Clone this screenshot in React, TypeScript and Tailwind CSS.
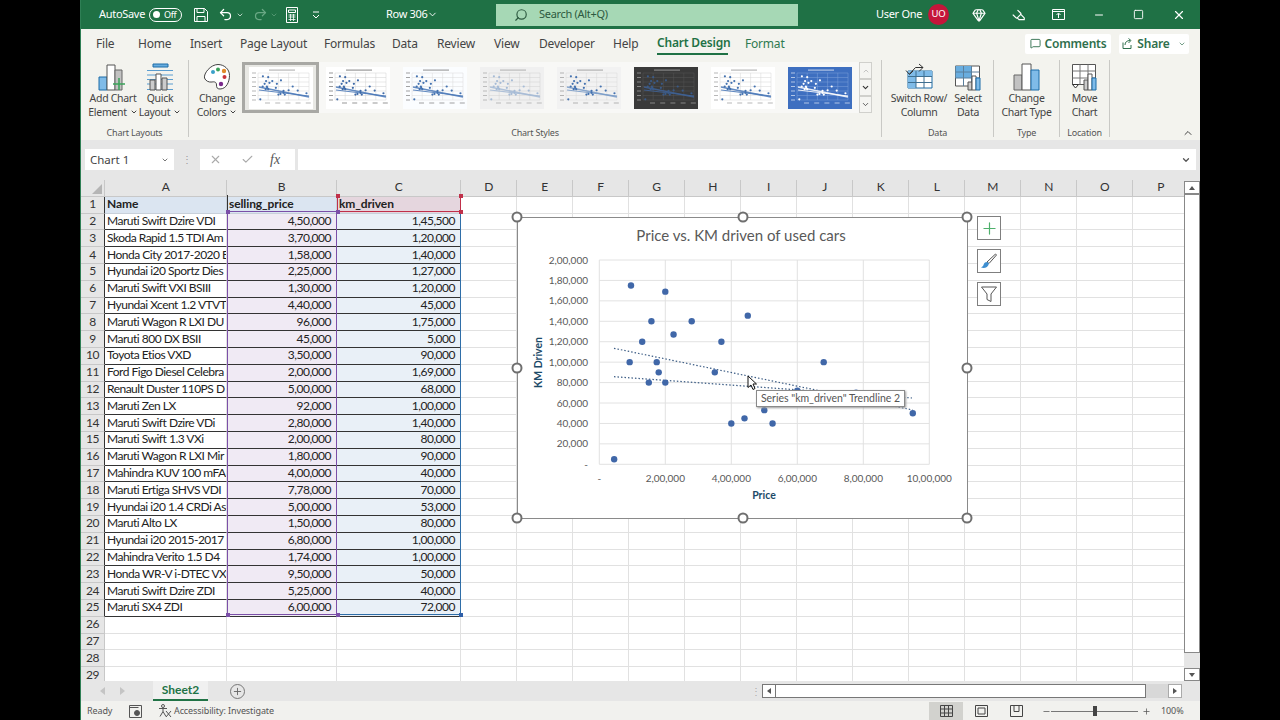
import { FC, ReactNode } from "react";
import { Check, ChevronDown, ChevronUp, Gem, Highlighter, MessageSquare, Minus, Plus, Redo2, Search, Square, Undo2, X } from "lucide-react";

const rows: [string, number, number][] = [
    ["Maruti Swift Dzire VDI", 450000, 145500],
    ["Skoda Rapid 1.5 TDI Am", 370000, 120000],
    ["Honda City 2017-2020 E", 158000, 140000],
    ["Hyundai i20 Sportz Dies", 225000, 127000],
    ["Maruti Swift VXI BSIII", 130000, 120000],
    ["Hyundai Xcent 1.2 VTVT", 440000, 45000],
    ["Maruti Wagon R LXI DU", 96000, 175000],
    ["Maruti 800 DX BSII", 45000, 5000],
    ["Toyota Etios VXD", 350000, 90000],
    ["Ford Figo Diesel Celebra", 200000, 169000],
    ["Renault Duster 110PS D", 500000, 68000],
    ["Maruti Zen LX", 92000, 100000],
    ["Maruti Swift Dzire VDi", 280000, 140000],
    ["Maruti Swift 1.3 VXi", 200000, 80000],
    ["Maruti Wagon R LXI Mir", 180000, 90000],
    ["Mahindra KUV 100 mFA", 400000, 40000],
    ["Maruti Ertiga SHVS VDI", 778000, 70000],
    ["Hyundai i20 1.4 CRDi As", 500000, 53000],
    ["Maruti Alto LX", 150000, 80000],
    ["Hyundai i20 2015-2017", 680000, 100000],
    ["Mahindra Verito 1.5 D4", 174000, 100000],
    ["Honda WR-V i-DTEC VX", 950000, 50000],
    ["Maruti Swift Dzire ZDI", 525000, 40000],
    ["Maruti SX4 ZDI", 600000, 72000],
];

const fmt = (n: number) => n.toLocaleString("en-IN");
const emptyCols = ["D", "E", "F", "G", "H", "I", "J", "K", "L", "M", "N", "O", "P"];

const Toggle = () => (
    <div className="w-[33px] h-[14px] rounded-full border border-white flex items-center gap-[4px] px-[3px]">
        <div className="w-[7px] h-[7px] rounded-full bg-white" />
        <span className="text-[9px] leading-none text-white">Off</span>
    </div>
);

const TitleBar = () => (
    <div className="h-[29px] bg-[#1f7145] flex items-center text-white text-[11px] tracking-[-0.3px] pl-[18px] whitespace-nowrap">
        <span className="w-[50px]">AutoSave</span>
        <Toggle />
        <svg width="16" height="16" viewBox="0 0 16 16" fill="none" stroke="white" className="ml-[11px]">
            <path d="M1.5 1.5h10l3 3v10h-13z M4 1.5v4h7v-4 M4 14.5v-5h8v5" />
        </svg>
        <Undo2 size={15} className="ml-[9px]" />
        <ChevronDown size={8} className="ml-[3px]" />
        <Redo2 size={15} className="ml-[9px] text-[#6aa885]" />
        <ChevronDown size={8} className="ml-[2px] text-[#6aa885]" />
        <svg width="12" height="16" viewBox="0 0 12 16" fill="none" stroke="white" className="ml-[8px]">
            <path d="M.5.5h11v15H.5z M2.5 3h7v2.5h-7z" />
            <path d="M2.5 8h7M2.5 10h7M2.5 12.5h7M4.5 7v7M7.5 7v7" strokeWidth=".8" />
        </svg>
        <svg width="8" height="8" viewBox="0 0 8 8" fill="none" stroke="white" className="ml-[14px]">
            <path d="M1 1h6M1 4l3 3 3-3" />
        </svg>
        <span className="ml-[66px] w-[41px]">Row 306</span>
        <ChevronDown size={11} />
        <div className="ml-[58px] w-[302px] h-[22px] bg-[#a6d8b5] flex items-center pl-[18px] text-[#2d5a40]">
            <Search size={14} className="-scale-x-100" />
            <span className="ml-[11px]">Search (Alt+Q)</span>
        </div>
        <span className="ml-[78px] w-[42px]">User One</span>
        <div className="ml-[10px] w-[21px] h-[21px] rounded-full bg-[#c4163a] flex items-center justify-center text-[9.5px]">UO</div>
        <Gem size={14} className="ml-[23px]" />
        <Highlighter size={14} className="ml-[26px] -scale-x-100" />
        <svg width="13" height="11" viewBox="0 0 13 11" fill="none" stroke="white" className="ml-[26px]">
            <path d="M.5.5h12v10H.5z M.5 2.5h12 M6.5 9V4.5 M4.5 6l2-2 2 2" />
        </svg>
        <Minus size={12} className="ml-[28px]" />
        <Square size={11} className="ml-[28px]" />
        <X size={14} className="ml-[28px]" />
    </div>
);

const tabs: [string, string][] = [
    ["File", "w-[42px]"],
    ["Home", "w-[52px]"],
    ["Insert", "w-[50px]"],
    ["Page Layout", "w-[84px]"],
    ["Formulas", "w-[68px]"],
    ["Data", "w-[45px]"],
    ["Review", "w-[57px]"],
    ["View", "w-[45px]"],
    ["Developer", "w-[74px]"],
    ["Help", "w-[44px]"],
];

const TabRow = () => (
    <div className="h-[28px] bg-[#f3f3ee] flex items-center text-[12px] tracking-[-0.2px] text-[#444] pl-[15px] pt-[1px]">
        {tabs.map(([t, w]) => <span key={t} className={w}>{t}</span>)}
        <span className="w-[88px] h-[27px] flex items-start font-semibold text-[#1f7145]">
            <span className="w-[71px] h-[25px] pt-[2px] flex items-center whitespace-nowrap border-b-[2px] border-[#1f7145]">Chart Design</span>
        </span>
        <span className="text-[#2f7a50]">Format</span>
        <div className="ml-auto flex items-center mr-[11px] gap-[8px] font-semibold text-[#2f6f4d]">
            <div className="w-[86px] h-[20px] bg-white rounded-[2px] flex items-center justify-center gap-[4px]">
                <MessageSquare size={11} />Comments
            </div>
            <div className="w-[70px] h-[20px] bg-white rounded-[2px] flex items-center justify-center gap-[4px]">
                <svg width="11" height="11" viewBox="0 0 11 11" fill="none" stroke="currentColor"><path d="M1 4.5v6h8V7 M3 7c0-3 2-4.500 5-4.500 M6.500.5l2.500 2-2.500 2.500" /></svg>
                Share<ChevronDown size={8} className="ml-[4px]" />
            </div>
        </div>
    </div>
);

const AddChartIcon = () => (
    <svg width="30" height="28" viewBox="0 0 30 28">
        <path d="M1 14h8v13H1z" fill="#7fbbe8" stroke="#1d6ca8" />
        <path d="M9 2h8v25H9z" fill="#fff" stroke="#555" />
        <path d="M17 7h7v20h-7z" fill="#c2c2c2" stroke="#666" />
        <path d="M21 15v12M15 21h12" stroke="#3aa25a" strokeWidth="1.500" fill="none" />
    </svg>
);

const QuickIcon = () => (
    <svg width="28" height="28" viewBox="0 0 28 28" fill="none">
        <path d="M7 1h15v3H7z" fill="#69addf" stroke="#1d6ca8" />
        <path d="M1 7.500h26M1 12h26M1 16.500h26M1 21h26M1 26.500h26" stroke="#5a9dd0" />
        <path d="M4 17h5v10H4z" fill="#ccc" stroke="#555" />
        <path d="M10 11h5v16h-5z" fill="#fff" stroke="#555" />
        <path d="M16 15h5v12h-5z" fill="#ccc" stroke="#555" />
    </svg>
);

const PaletteIcon = () => (
    <svg width="28" height="28" viewBox="0 0 28 28">
        <path d="M15 1.500c6 0 11.500 4.500 11.500 11 0 6-3 13.500-9.500 13.500-3 0-3.500-1.500-3.500-4 0-3-2-3.500-4.500-3-3 .5-6.500-1-7.500-4-1-4.500 6-13.500 13.500-13.500z" fill="#fff" stroke="#444" />
        <circle cx="10" cy="9" r="2" fill="#3aa0c8" />
        <circle cx="15" cy="6.500" r="2" fill="#3aa25a" />
        <circle cx="21" cy="8" r="2.200" fill="#e08a2a" />
        <circle cx="21.500" cy="14" r="2" fill="#c8323a" />
        <circle cx="18" cy="21" r="2.200" fill="#7a2a8c" />
    </svg>
);

const SwitchIcon = () => (
    <svg width="28" height="28" viewBox="0 0 28 28" fill="none">
        <path d="M3 8h24v17H3z" fill="#fff" stroke="#1d6ca8" />
        <path d="M3 8h24v5.500H3zM3 13.500h8V25H3z" fill="#7fbbe8" />
        <path d="M3 13.500h24M3 19.500h24M11 8v17M19 8v17" stroke="#3f6f90" />
        <path d="M14 1l4 3.500-4 4M18 4.500h-7.500l-6 6.500 M1 7.500l3.500 4 3.500-3.500" stroke="#333" />
    </svg>
);

const SelectIcon = () => (
    <svg width="28" height="28" viewBox="0 0 28 28" fill="none">
        <path d="M1.500 3h24v20h-24z" fill="#fff" stroke="#555" />
        <path d="M1.500 3h16v12h-16z" fill="#69addf" />
        <path d="M1.500 9h24M1.500 15h24M9.500 3v20M17.500 3v20" stroke="#5a7f9c" />
        <path d="M14 19h4v8h-4z" fill="#ccc" stroke="#555" />
        <path d="M18 13h4v14h-4z" fill="#fff" stroke="#555" />
        <path d="M22 15h4v12h-4z" fill="#7fbbe8" stroke="#1d6ca8" />
    </svg>
);

const ChangeTypeIcon = () => (
    <svg width="28" height="28" viewBox="0 0 28 28">
        <path d="M1 12h8v15H1z" fill="#c2c2c2" stroke="#666" />
        <path d="M9 1h9v26H9z" fill="#fff" stroke="#555" />
        <path d="M18 7h8v20h-8z" fill="#7fbbe8" stroke="#1d6ca8" />
    </svg>
);

const MoveIcon = () => (
    <svg width="28" height="28" viewBox="0 0 28 28" fill="none">
        <path d="M1.500 1.500h23v20h-23z" fill="#fff" stroke="#555" />
        <path d="M1.500 8h23M1.500 15h23M9 1.500v20M17 1.500v20" stroke="#777" />
        <path d="M1.500 21.500h6l-3 3.500z" fill="#fff" stroke="#333" />
        <path d="M13 17h4v10h-4z" fill="#ccc" stroke="#555" />
        <path d="M17 11h4v16h-4z" fill="#fff" stroke="#555" />
        <path d="M21 15h4v12h-4z" fill="#7fbbe8" stroke="#1d6ca8" />
    </svg>
);

interface IBtn {
    icon: ReactNode;
    lines: [ReactNode, ReactNode];
    className: string;
}

const RibbonBtn: FC<IBtn> = ({ icon, lines, className }) => (
    <div className={`flex flex-col items-center ${className}`}>
        <div className="h-[28px] mt-[3px] flex items-center justify-center">{icon}</div>
        <span className="leading-[14px] whitespace-nowrap">{lines[0]}</span>
        <span className="leading-[14px] whitespace-nowrap flex items-center gap-[3px]">{lines[1]}</span>
    </div>
);

const Caret = () => <ChevronDown size={8} strokeWidth={3} />;

interface IGroup {
    label: string;
    className: string;
    children: ReactNode;
}

const Group: FC<IGroup> = ({ label, className, children }) => (
    <div className={`h-[77px] mt-[3px] flex flex-col border-r border-[#c9c9c5] ${className}`}>
        <div className="flex h-[68px]">{children}</div>
        <div className="text-center text-[9px] tracking-[-0.2px] leading-[9px] text-[#555]">{label}</div>
    </div>
);

const thumbStyles = [
    { bg: "#ffffff", grid: "#d6d6d6", dot: "#4472b0", line: "#4a78b8", title: "#8a8a8a" },
    { bg: "#ffffff", grid: "#d0d0d0", dot: "#3f6aa8", line: "#4a78b8", title: "#555555" },
    { bg: "#fbfdff", grid: "#dadada", dot: "#4472b0", line: "#4a78b8", title: "#666666" },
    { bg: "#f0f0f0", grid: "#d2d2d2", dot: "#a6bbd6", line: "#a6bbd6", title: "#999999" },
    { bg: "#f2f2f2", grid: "#d8d8d8", dot: "#4472b0", line: "#7a9cc8", title: "#888888" },
    { bg: "#3a3a3a", grid: "#555555", dot: "#3a5a88", line: "#3f6296", title: "#bbbbbb" },
    { bg: "#ffffff", grid: "#d6d6d6", dot: "#4472b0", line: "#4a78b8", title: "#888888" },
    { bg: "#3e6fc0", grid: "#7ea2da", dot: "#ffffff", line: "#ffffff", title: "#ffffff" },
];

const Thumb: FC<{ style: typeof thumbStyles[number] }> = ({ style }) => (
    <svg width="64" height="42" viewBox="0 0 64 42">
        <rect width="64" height="42" fill={style.bg} />
        <rect x="20" y="2.500" width="26" height="1.200" fill={style.title} opacity=".6" />
        {[0, 1, 2, 3, 4, 5, 6].map((i) => <path key={i} d={`M9 ${6 + i * 4.500}H60`} stroke={style.grid} strokeWidth=".5" />)}
        {[0, 1, 2, 3, 4, 5].map((i) => <path key={i} d={`M${9 + i * 10.200} 6V33`} stroke={style.grid} strokeWidth=".5" />)}
        {[0, 1, 2, 3, 4, 5, 6].map((i) => <rect key={i} x="3" y={5.500 + i * 4.500} width="4" height="1" fill={style.title} opacity=".6" />)}
        <path d="M10 20L60 30" stroke={style.line} strokeWidth="1.600" opacity=".85" />
        <path d="M10 23L60 29" stroke={style.line} strokeWidth="1.200" opacity=".85" />
        {rows.map(([n, p, k]) => <circle key={n} cx={9 + p / 19600} cy={33 - k / 7400} r="1.100" fill={style.dot} />)}
        {[0, 1, 2, 3, 4].map((i) => <rect key={i} x={16 + i * 10.200} y="35.500" width="5" height="1" fill={style.title} opacity=".6" />)}
    </svg>
);

const GalleryArrow: FC<{ children: ReactNode; dark?: boolean }> = ({ children, dark }) => (
    <div className={`h-[17px] flex items-center justify-center border border-[#d0d0cc] bg-[#f5f5f2] ${dark ? "text-[#333]" : "text-[#aaa]"}`}>{children}</div>
);

const Ribbon = () => (
    <div className="h-[83px] bg-[#f3f3ee] flex text-[10.5px] tracking-[-0.3px] text-[#444]">
        <Group label="Chart Layouts" className="w-[108px]">
            <RibbonBtn className="w-[48px] ml-[8px]" icon={<AddChartIcon />} lines={["Add Chart", <>Element <Caret /></>]} />
            <RibbonBtn className="w-[46px]" icon={<QuickIcon />} lines={["Quick", <>Layout <Caret /></>]} />
        </Group>
        <Group label="Chart Styles" className="w-[693px]">
            <RibbonBtn className="w-[46px] ml-[5px]" icon={<PaletteIcon />} lines={["Change", <>Colors <Caret /></>]} />
            <div className="ml-[2px] h-[51px] mt-[2px] flex bg-[#f8f8f6]">
                {thumbStyles.map((s, i) => (
                    <div key={i} className={`w-[77px] flex items-center justify-center ${i === 0 ? "border-[3px] border-[#a8a8a4] bg-[#e8e8e4]" : ""}`}>
                        <Thumb style={s} />
                    </div>
                ))}
                <div className="ml-[1px] w-[13px] flex flex-col">
                    <GalleryArrow><ChevronUp size={8} /></GalleryArrow>
                    <GalleryArrow dark><ChevronDown size={9} strokeWidth={3} /></GalleryArrow>
                    <GalleryArrow dark><ChevronDown size={9} strokeWidth={2} /></GalleryArrow>
                </div>
            </div>
        </Group>
        <Group label="Data" className="w-[112px]">
            <RibbonBtn className="w-[56px] ml-[9px]" icon={<SwitchIcon />} lines={["Switch Row/", "Column"]} />
            <RibbonBtn className="w-[42px]" icon={<SelectIcon />} lines={["Select", "Data"]} />
        </Group>
        <Group label="Type" className="w-[66px]">
            <RibbonBtn className="w-[66px]" icon={<ChangeTypeIcon />} lines={["Change", "Chart Type"]} />
        </Group>
        <Group label="Location" className="w-[50px]">
            <RibbonBtn className="w-[50px]" icon={<MoveIcon />} lines={["Move", "Chart"]} />
        </Group>
        <div className="flex-1 flex items-end justify-end pr-[6px] pb-[1px]">
            <ChevronUp size={12} />
        </div>
    </div>
);

const FormulaBar = () => (
    <div className="h-[40px] bg-[#e6e6e6] flex items-start pt-[9px] pl-[4px] pr-[4px] text-[#444]">
        <div className="w-[89px] h-[21px] bg-white flex items-center justify-between px-[5px] text-[11.5px]">
            Chart 1<ChevronDown size={8} strokeWidth={3} className="text-[#777]" />
        </div>
        <div className="w-[26px] flex justify-center h-[21px] items-center text-[#999] text-[10px]">⋮</div>
        <div className="w-[95px] h-[21px] bg-white flex items-center text-[#aaa]">
            <X size={13} className="ml-[9px]" />
            <Check size={13} className="ml-[19px]" />
            <span className="ml-[16px] text-[#555] italic text-[14px] font-['Liberation_Serif',serif]">fx</span>
        </div>
        <div className="ml-[3px] flex-1 h-[21px] bg-white flex items-center justify-end pr-[5px]">
            <ChevronDown size={10} strokeWidth={3} className="text-[#555]" />
        </div>
    </div>
);

const Handle: FC<{ className: string }> = ({ className }) => (
    <div className={`absolute w-[11px] h-[11px] rounded-full bg-white border-2 border-[#6f6f6f] -translate-x-1/2 -translate-y-1/2 ${className}`} />
);

const yTicks = ["-", "20,000", "40,000", "60,000", "80,000", "1,00,000", "1,20,000", "1,40,000", "1,60,000", "1,80,000", "2,00,000"];
const xTicks = ["-", "2,00,000", "4,00,000", "6,00,000", "8,00,000", "10,00,000"];

// chart box starts at 518,218 once the border is counted
const PLOT_L = 81.3;
const PLOT_R = 411.3;
const PLOT_T = 42;
const PLOT_B = 246.3;

const Plot = () => (
    <svg width="449" height="300" viewBox="0 0 449 300" className="block font-['Lato',sans-serif]">
        {yTicks.map((t, i) => {
            const y = PLOT_B - (i * (PLOT_B - PLOT_T)) / 10;
            return (
                <g key={t}>
                    <path d={`M${PLOT_L} ${y}H${PLOT_R}`} stroke="#e2e2e2" />
                    <text x="70" y={y + 3.500} textAnchor="end" fontSize="10" fill="#595959">{t}</text>
                </g>
            );
        })}
        {xTicks.map((t, i) => {
            const x = PLOT_L + i * 66;
            return (
                <g key={t}>
                    <path d={`M${x} ${PLOT_T}V${PLOT_B}`} stroke="#e2e2e2" />
                    <text x={x} y="264" textAnchor="middle" fontSize="10" fill="#595959">{t}</text>
                </g>
            );
        })}
        <text x="223" y="23" textAnchor="middle" fontSize="15" fill="#595959">Price vs. KM driven of used cars</text>
        <text x="246" y="281" textAnchor="middle" fontSize="10.500" fontWeight="700" fill="#1c4a68">Price</text>
        <text transform="translate(24 144.500) rotate(-90)" textAnchor="middle" fontSize="10.500" fontWeight="700" fill="#1c4a68">KM Driven</text>
        <path d="M96 130.300L394.700 192" stroke="#3d5d85" strokeWidth="1.200" strokeDasharray="1.500 2" />
        <path d="M96 158.700L394 180" stroke="#3d5d85" strokeWidth="1.200" strokeDasharray="1.500 2" />
        {rows.map(([n, p, k]) => (
            <circle key={n} cx={PLOT_L + (p / 1000000) * 330} cy={PLOT_B - (k / 200000) * 204.300} r="3.200" fill="#4067a8" />
        ))}
    </svg>
);

const Chart = () => (
    <div className="absolute left-[436px] top-[37px] w-[451px] h-[302px] bg-white border border-[#8a8a8a] tracking-normal">
        <Plot />
        <div className="absolute left-[238px] top-[172px] w-[149px] h-[17px] bg-white border border-[#8a8a8a] shadow-[1px_1px_2px_#999] flex items-center justify-center text-[10.5px] text-[#555] font-['Lato',sans-serif] whitespace-nowrap">
            Series "km_driven" Trendline 2
        </div>
        <svg width="10" height="15" viewBox="0 0 10 15" className="absolute left-[229px] top-[157px]">
            <path d="M1 1v11.500l3-2.500 2 4.500 2-1-2-4.500h3.500z" fill="#fff" stroke="#111" />
        </svg>
        <Handle className="left-[-1px] top-[-1px]" />
        <Handle className="left-1/2 top-[-1px]" />
        <Handle className="left-full top-[-1px]" />
        <Handle className="left-[-1px] top-1/2" />
        <Handle className="left-full top-1/2" />
        <Handle className="left-[-1px] top-full" />
        <Handle className="left-1/2 top-full" />
        <Handle className="left-full top-full" />
        <div className="absolute left-[459px] top-[-2px] flex flex-col gap-[9px]">
            <div className="w-[24px] h-[24px] bg-white border border-[#7f7f7f] flex items-center justify-center text-[#4fb06c]"><Plus size={19} strokeWidth={1.500} /></div>
            <div className="w-[24px] h-[24px] bg-white border border-[#7f7f7f] flex items-center justify-center">
                <svg width="18" height="18" viewBox="0 0 18 18" fill="none">
                    <path d="M7 10L15.500 2 16.500 3 9 11.500z" fill="#fff" stroke="#555" />
                    <path d="M7 10c-2 0-3 1-3.500 3-.3 1-1.500 2-2.500 2.500 3 1 7 .5 8-4z" fill="#3f8fd0" />
                </svg>
            </div>
            <div className="w-[24px] h-[24px] bg-white border border-[#7f7f7f] flex items-center justify-center">
                <svg width="18" height="18" viewBox="0 0 18 18" fill="none" stroke="#555"><path d="M1.500 2h15l-5.500 7v7.500l-4-2V9z" /></svg>
            </div>
        </div>
    </div>
);

const Cell: FC<{ className?: string; children?: ReactNode }> = ({ className, children }) => (
    <div className={`flex items-center overflow-hidden whitespace-nowrap border-r border-b pb-[1px] ${className}`}>{children}</div>
);

const RowHead: FC<{ n: number }> = ({ n }) => (
    <div className={`bg-[#e6e6e6] border-r border-b border-b-[#c8c8c8] flex items-center justify-center text-[#333] pb-[1px] ${n <= 25 ? "border-r-[#333]" : "border-r-[#c8c8c8]"}`}>{n}</div>
);

const Dot: FC<{ className: string }> = ({ className }) => <div className={`absolute w-[4px] h-[4px] ${className}`} />;

const Sheet = () => (
    <div className="relative flex-1 overflow-hidden bg-white font-['Lato',sans-serif] text-[12px] tracking-[-0.5px] text-[#222]">
        <div className="grid grid-cols-[24px_122px_110px_124px_repeat(13,56px)] auto-rows-[16.8px]">
            <div className="bg-[#e6e6e6] border-r border-b border-[#c8c8c8] flex items-end justify-end p-[2px]">
                <div className="w-0 h-0 border-l-[10px] border-l-transparent border-b-[10px] border-b-[#b5b5b5]" />
            </div>
            {["A", "B", "C", ...emptyCols].map((c) => (
                <div key={c} className="bg-[#e6e6e6] border-r border-b border-[#c8c8c8] flex items-center justify-center text-[#333] pb-[1px]">{c}</div>
            ))}
            <RowHead n={1} />
            <Cell className="pl-[2px] font-bold tracking-[-0.1px] bg-[#dbe5f1] border-[#c8d0da]">Name</Cell>
            <Cell className="pl-[2px] font-bold tracking-[-0.1px] bg-[#dbe5f1] border-[#c8d0da]">selling_price</Cell>
            <Cell className="pl-[2px] font-bold tracking-[-0.1px] bg-[#e5d6de] border-[#c8d0da]">km_driven</Cell>
            {emptyCols.map((c) => <Cell key={c} className="border-[#e1e1e1]" />)}
            {rows.map(([name, price, km], i) => (
                <div key={name} className="contents">
                    <RowHead n={i + 2} />
                    <Cell className="pl-[2px] border-b-[#333] border-r-[#e1e1e1]">{name}</Cell>
                    <Cell className="justify-end pr-[5px] bg-[#f0eaf4] border-b-[#333] border-r-[#e1e1e1]">{fmt(price)}</Cell>
                    <Cell className="justify-end pr-[5px] bg-[#e9f0f7] border-b-[#333] border-r-[#e1e1e1]">{fmt(km)}</Cell>
                    {emptyCols.map((c) => <Cell key={c} className="border-[#e1e1e1]" />)}
                </div>
            ))}
            {[26, 27, 28, 29].map((n) => (
                <div key={n} className="contents">
                    <RowHead n={n} />
                    {["A", "B", "C", ...emptyCols].map((c) => <Cell key={c} className="border-[#e1e1e1]" />)}
                </div>
            ))}
        </div>
        <div className="absolute left-[146px] top-[15px] w-[1px] h-[17px] bg-[#333]" />
        <div className="absolute left-[146px] top-[31px] w-[110px] h-[404px] border border-[#7b4fa8]" />
        <div className="absolute left-[256px] top-[31px] w-[124px] h-[404px] border border-[#2f6ea8] border-l-0" />
        <div className="absolute left-[256px] top-[15px] w-[124px] h-[17px] border border-[#c0304a] border-t-0" />
        <Dot className="left-[255px] top-[14px] bg-[#c0304a]" />
        <Dot className="left-[378px] top-[14px] bg-[#c0304a]" />
        <Dot className="left-[378px] top-[30px] bg-[#c0304a]" />
        <Dot className="left-[145px] top-[30px] bg-[#7b4fa8]" />
        <Dot className="left-[255px] top-[30px] bg-[#7b4fa8]" />
        <Dot className="left-[145px] top-[433px] bg-[#7b4fa8]" />
        <Dot className="left-[255px] top-[433px] bg-[#7b4fa8]" />
        <Dot className="left-[378px] top-[433px] bg-[#2f5fa8]" />
        <Chart />
    </div>
);

const VScroll = () => (
    <div className="w-[16px] bg-[#e6e6e6] flex flex-col text-[#555]">
        <div className="h-[13px] mt-[1px] bg-white border border-[#888] flex items-center justify-center"><div className="w-0 h-0 border-x-[3px] border-x-transparent border-b-[4px] border-b-[#555]" /></div>
        <div className="h-[459px] bg-white border border-[#888]" />
        <div className="flex-1" />
        <div className="h-[13px] bg-white border border-[#888] flex items-center justify-center"><div className="w-0 h-0 border-x-[3px] border-x-transparent border-t-[4px] border-t-[#555]" /></div>
    </div>
);

const SheetBar = () => (
    <div className="h-[20px] bg-[#e6e6e6] flex items-center text-[#666]">
        <div className="w-[72px] flex justify-end gap-[15px] pr-[28px] text-[#bbb]">
            <div className="w-0 h-0 border-y-[4px] border-y-transparent border-r-[5px] border-r-[#c4c4c4]" />
            <div className="w-0 h-0 border-y-[4px] border-y-transparent border-l-[5px] border-l-[#c4c4c4]" />
        </div>
        <div className="w-[55px] h-[20px] bg-[#f0f0f0] border-b-[2px] border-[#217346] flex items-center justify-center text-[12px] font-bold text-[#217346] font-['Lato',sans-serif]">Sheet2</div>
        <div className="ml-[22px] w-[15px] h-[15px] rounded-full border border-[#777] flex items-center justify-center"><Plus size={11} /></div>
        <span className="ml-[506px] w-[11px] text-[10px] text-[#aaa]">⋮</span>
        <div className="h-[14px] w-[420px] flex bg-[#d8d8d8]">
            <div className="w-[14px] bg-white border border-[#777] flex items-center justify-center"><div className="w-0 h-0 border-y-[3px] border-y-transparent border-r-[4px] border-r-[#555]" /></div>
            <div className="w-[370px] bg-white border-y border-r border-[#777]" />
            <div className="flex-1" />
            <div className="w-[14px] bg-white border border-[#aaa] flex items-center justify-center"><div className="w-0 h-0 border-y-[3px] border-y-transparent border-l-[4px] border-l-[#555]" /></div>
        </div>
    </div>
);

const StatusBar = () => (
    <div className="h-[19px] bg-[#f1f1ee] flex items-center text-[9px] tracking-[-0.1px] text-[#555] pl-[6px] pt-[1px]">
        <span className="w-[42px]">Ready</span>
        <svg width="14" height="13" viewBox="0 0 14 13" fill="none" stroke="#555"><path d="M.5 2.500h9M.5.500h12v12H.5z" /><circle cx="8" cy="8" r="2.500" fill="#555" /></svg>
        <svg width="14" height="14" viewBox="0 0 14 14" fill="none" stroke="#555" className="ml-[15px]"><circle cx="5" cy="2" r="1.500" /><path d="M1 4.500h8M5 4.500v3L2 12.500M5 7.500l3 5M8 7l5 6M13 7l-5 6" /></svg>
        <span className="ml-[2px] w-[755px]">Accessibility: Investigate</span>
        <div className="w-[34px] h-[18px] bg-[#d2d2ce] flex items-center justify-center">
            <svg width="13" height="12" viewBox="0 0 13 12" fill="none" stroke="#444"><path d="M.5.500h12v11H.5zM.5 4h12M.5 8h12M4.500.500v11M8.500.500v11" /></svg>
        </div>
        <div className="w-[36px] flex justify-center">
            <svg width="13" height="12" viewBox="0 0 13 12" fill="none" stroke="#444"><path d="M.5.500h12v11H.5zM3 3h7v6H3z" /></svg>
        </div>
        <div className="w-[34px] flex justify-center">
            <svg width="13" height="12" viewBox="0 0 13 12" fill="none" stroke="#444"><path d="M.5.500h12v11H.5zM4 .500v6h5v-6" /></svg>
        </div>
        <Minus size={9} className="ml-[9px]" />
        <div className="w-[87px] h-[1px] bg-[#777] flex justify-center items-center"><div className="w-[4px] h-[10px] bg-[#444]" /></div>
        <Plus size={9} className="ml-[4px]" />
        <span className="ml-[10px]">100%</span>
    </div>
);

export default function App() {
    return (
        <div className="w-[1280px] h-[720px] bg-black flex justify-center overflow-hidden">
            <div className="w-[1120px] h-[720px] border-l border-[#2f7f55] flex flex-col font-['Noto_Sans',sans-serif] bg-[#e6e6e6]">
                <TitleBar />
                <TabRow />
                <Ribbon />
                <FormulaBar />
                <div className="h-[501px] flex">
                    <Sheet />
                    <VScroll />
                </div>
                <SheetBar />
                <StatusBar />
            </div>
        </div>
    );
}
